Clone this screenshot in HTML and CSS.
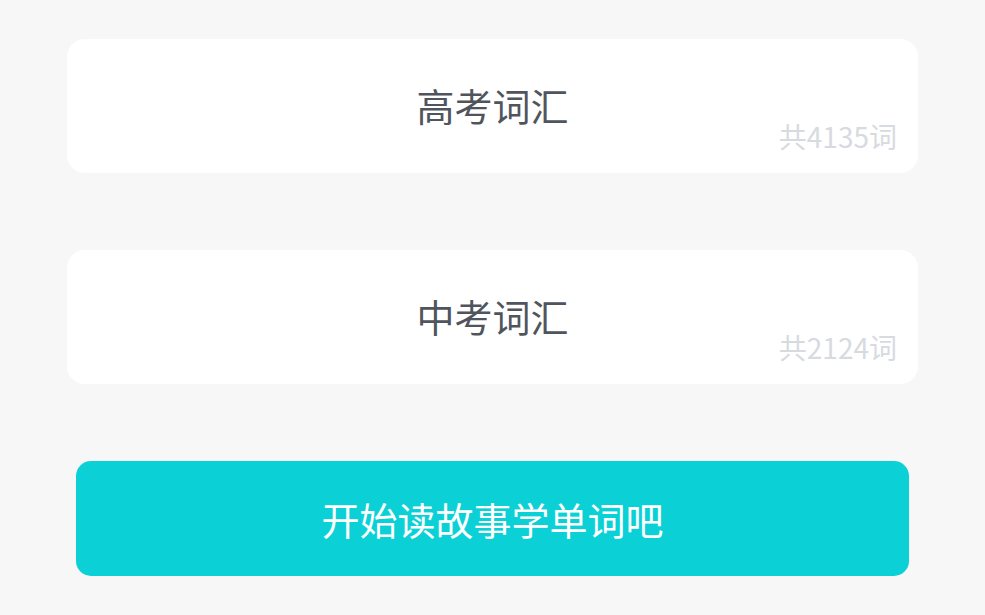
FILE: index.html
```html
<!DOCTYPE html>
<html lang="zh-CN">
<head>
<meta charset="utf-8">
<link rel="stylesheet" href="styles.css">
</head>
<body>
<main class="page">
  <div class="card">
    <div class="card-title">高考词汇</div>
    <div class="card-count">共4135词</div>
  </div>
  <div class="card">
    <div class="card-title">中考词汇</div>
    <div class="card-count">共2124词</div>
  </div>
  <button class="start-btn">开始读故事学单词吧</button>
</main>
</body>
</html>
```

FILE: styles.css
```css
html, body {
  margin: 0;
  padding: 0;
  background: #f7f7f7;
  font-family: "Noto Sans CJK SC", "Noto Sans", sans-serif;
}
.page {
  width: 851px;
  margin-left: 67px;
  padding-top: 39px;
  display: flex;
  flex-direction: column;
  gap: 77px;
}
.card {
  box-sizing: border-box;
  height: 134px;
  background: #ffffff;
  border-radius: 18px;
  padding: 46px 21px 0 0;
  display: flex;
  flex-direction: column;
}
.card-title {
  text-align: center;
  padding-left: 21px;
  font-size: 38px;
  line-height: 40px;
  color: #50555d;
}
.card-count {
  text-align: right;
  font-size: 28px;
  line-height: 22px;
  color: #d7dadf;
}
.start-btn {
  margin: 0 9px;
  height: 115px;
  border: none;
  border-radius: 15px;
  background: #0bd1d7;
  color: #ffffff;
  font-family: "Noto Sans CJK SC", "Noto Sans", sans-serif;
  font-size: 38px;
  padding: 0;
}
```
